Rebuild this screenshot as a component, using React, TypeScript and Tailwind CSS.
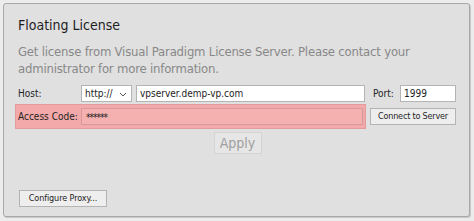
export default function App() {
  return (
    <div className="w-[474px] h-[221px] bg-[#ececec] p-[3px] pb-[4px] font-['DejaVu_Sans_Condensed','Liberation_Sans',Arial,sans-serif] whitespace-nowrap">
      <div className="h-full w-[467px] rounded-[3px] border border-[#a8a8a8] bg-[#e0e0e0] shadow-[1px_1px_0_#c8c8c8] flex flex-col pl-[11px] pr-[12px]">
        <h1 className="mt-[12px] ml-[3px] text-[14px] leading-[18px] text-[#1e1e1e]">Floating License</h1>
        <p className="mt-[9px] ml-[3px] text-[13px] leading-[17px] tracking-[-0.2px] text-[#888888] whitespace-normal w-[420px]">
          Get license from Visual Paradigm License Server. Please contact your administrator for more information.
        </p>

        {/* host row */}
        <div className="mt-[8px] flex items-center h-[17px] text-[10px] text-[#1e1e1e]">
          <span className="ml-[3px] w-[63px] shrink-0">Host:</span>
          <div className="h-[17px] w-[51px] shrink-0 border border-[#b4b4b4] bg-white flex items-center justify-between pl-[3px] pr-[4px]">
            <span>http://</span>
            <svg width="8" height="5" viewBox="0 0 8 5" className="mt-[2px]">
              <path d="M1 1l3 3 3-3" fill="none" stroke="#555" strokeWidth="1" />
            </svg>
          </div>
          <div className="ml-[4px] h-[17px] w-[229px] shrink-0 border border-[#b4b4b4] bg-white flex items-center pl-[3px]">
            vpserver.demp-vp.com
          </div>
          <span className="ml-[8px] w-[27px] shrink-0">Port:</span>
          <div className="h-[17px] w-[56px] shrink-0 border border-[#b4b4b4] bg-white flex items-center pl-[3px]">1999</div>
        </div>

        {/* access code row */}
        <div className="mt-[2px] flex items-center text-[10px] text-[#1e1e1e]">
          <div className="h-[25px] w-[351px] shrink-0 bg-[#f3a9a9] border border-[#e39b9b] flex items-center pl-[2px]">
            <span className="w-[63px] shrink-0">Access Code:</span>
            <div className="h-[17px] w-[282px] shrink-0 border border-[#d79a9a] bg-[#f5b0b0] flex items-center pl-[4px] pt-[1px] tracking-[-1px] text-[10px]">
              ******
            </div>
          </div>
          <button className="ml-[4px] h-[17px] w-[86px] shrink-0 border border-[#b4b4b4] bg-[#eeeeee] text-[9px] tracking-[-0.2px] text-[#1e1e1e]">
            Connect to Server
          </button>
        </div>

        <div className="mt-[3px] flex justify-center pl-[3px]">
          <button className="h-[22px] w-[48px] border border-[#d4d4d4] bg-[#e6e6e6] text-[14px] text-[#a0a0a0]">Apply</button>
        </div>

        <div className="mt-auto mb-[8px] ml-[4px]">
          <button className="h-[17px] w-[88px] border border-[#b4b4b4] bg-[#eeeeee] text-[9px] tracking-[-0.1px] text-[#1e1e1e]">
            Configure Proxy...
          </button>
        </div>
      </div>
    </div>
  )
}
